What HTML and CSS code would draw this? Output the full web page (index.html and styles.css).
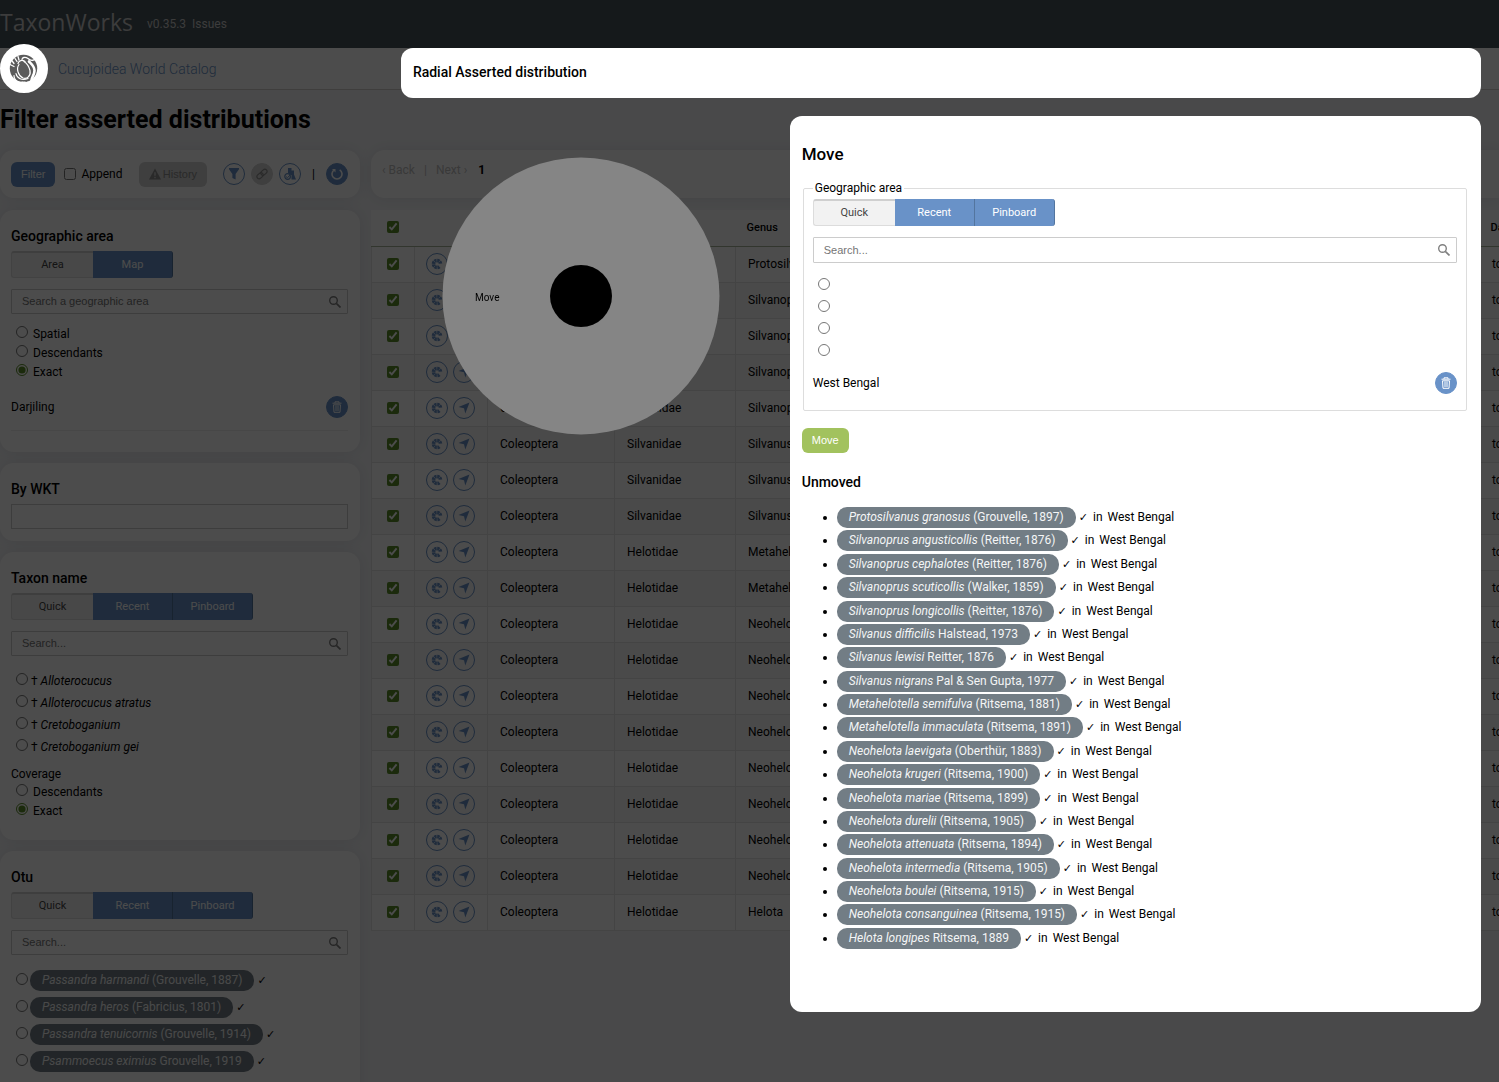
FILE: index.html
```html
<!DOCTYPE html>
<html lang="en">
<head>
<meta charset="utf-8">
<title>Filter asserted distributions</title>
<link rel="stylesheet" href="styles.css">
</head>
<body>
<svg class="sprite" aria-hidden="true">
  <symbol id="i-radial" viewBox="0 0 12 12"><circle cx="6" cy="6" r="3.500" fill="none" stroke="currentColor" stroke-width="3.600" pathLength="8" stroke-dasharray=".8 .2 .8 .2 .8 .2 .8 .2 .8 .2 .8 .2 .8 1.200" transform="rotate(48 6 6)"/></symbol>
  <symbol id="i-nav" viewBox="0 0 12 12"><path d="M11.500 .5 7.300 11.500 6 6.300 .5 5z" fill="currentColor"/></symbol>
  <symbol id="i-search" viewBox="0 0 12 12"><circle cx="4.500" cy="4.500" r="3.800" fill="none" stroke="currentColor" stroke-width="1.400"/><path d="M7.300 7.300 11.500 11.500" stroke="currentColor" stroke-width="1.700"/></symbol>
  <symbol id="i-trash" viewBox="0 0 12 12"><path d="M1.500 2.200h9M4 2V.8h4V2M2.500 3.800h7l-.5 7.500H3z" fill="none" stroke="currentColor"/><path d="M5 4.500v5.500M7 4.500v5.500" stroke="currentColor"/></symbol>
  <symbol id="i-funnel" viewBox="0 0 12 12"><path d="M1 0h10v1.200L7.600 6v5.500L4.400 10V6L1 1.200z" fill="currentColor"/></symbol>
  <symbol id="i-link" viewBox="0 0 12 12"><g fill="none" stroke="currentColor" stroke-width="1.100" transform="rotate(-42 6 6)"><rect x="0" y="3.800" width="6.800" height="4.400" rx="2.200"/><rect x="5.200" y="3.800" width="6.800" height="4.400" rx="2.200"/></g></symbol>
  <symbol id="i-source" viewBox="0 0 12 12"><path d="M4 0h3.500v2.500H10V6.500L12 11.500H7.500V7H6.500L4 5z" fill="currentColor"/><circle cx="3.600" cy="8.500" r="2.800" fill="none" stroke="currentColor" stroke-width="1.200"/><path d="M2 8.500l1.400 1.300L6 7" fill="none" stroke="currentColor"/></symbol>
  <symbol id="i-reset" viewBox="0 0 12 12"><path d="M3.300 1.800a5 5 0 1 0 5.400 0" fill="none" stroke="currentColor" stroke-width="1.600"/><path d="M1 1h3.500v3.500z" fill="currentColor"/></symbol>
  <symbol id="i-warn" viewBox="0 0 12 12"><path d="M6 .5 12 11.500H0z" fill="currentColor"/><path d="M6 4.300v3.500M6 8.800V10.300" stroke="#d2d2d2" stroke-width="1.400"/></symbol>
</svg>

<div class="app">
  <header class="topbar">
    <a class="brand" href="#">TaxonWorks</a>
    <a href="#">v0.35.3</a>
    <a href="#">Issues</a>
  </header>
  <nav class="project"><a href="#">Cucujoidea World Catalog</a></nav>
  <h1>Filter asserted distributions</h1>

  <div class="columns">
    <aside class="sidebar">
      <section class="card actions">
        <button class="btn primary">Filter</button>
        <label class="append"><input type="checkbox"> Append</label>
        <button class="btn history" disabled><svg class="icon"><use href="#i-warn"/></svg>History</button>
        <div class="circles">
          <button class="circle" aria-label="Radial filter"><svg class="icon"><use href="#i-funnel"/></svg></button>
          <button class="circle off" aria-label="Linker" disabled><svg class="icon"><use href="#i-link"/></svg></button>
          <button class="circle" aria-label="Source"><svg class="icon"><use href="#i-source"/></svg></button>
        </div>
        <span class="bar">|</span>
        <button class="circle solid" aria-label="Reset"><svg class="icon"><use href="#i-reset"/></svg></button>
      </section>

      <section class="card">
        <h2>Geographic area</h2>
        <div class="tabs"><button class="active">Area</button><button>Map</button></div>
        <div class="search"><input type="text" placeholder="Search a geographic area" aria-label="Search a geographic area"><svg class="icon"><use href="#i-search"/></svg></div>
        <div class="options">
          <label><input type="radio" name="geo">Spatial</label>
          <label><input type="radio" name="geo">Descendants</label>
          <label><input type="radio" name="geo" checked>Exact</label>
        </div>
        <div class="picked"><span>Darjiling</span><button class="circle solid" aria-label="Remove"><svg class="icon"><use href="#i-trash"/></svg></button></div>
        <hr>
      </section>

      <section class="card">
        <h2><label for="wkt">By WKT</label></h2>
        <input class="field" type="text" id="wkt">
      </section>

      <section class="card">
        <h2>Taxon name</h2>
        <div class="tabs"><button class="active">Quick</button><button>Recent</button><button>Pinboard</button></div>
        <div class="search"><input type="text" placeholder="Search..." aria-label="Search taxon name"><svg class="icon"><use href="#i-search"/></svg></div>
        <div class="options names">
          <label><input type="radio" name="taxon"><span>† <i>Alloterocucus</i></span></label>
          <label><input type="radio" name="taxon"><span>† <i>Alloterocucus atratus</i></span></label>
          <label><input type="radio" name="taxon"><span>† <i>Cretoboganium</i></span></label>
          <label><input type="radio" name="taxon"><span>† <i>Cretoboganium gei</i></span></label>
        </div>
        <div class="coverage">Coverage</div>
        <div class="options last">
          <label><input type="radio" name="cov">Descendants</label>
          <label><input type="radio" name="cov" checked>Exact</label>
        </div>
      </section>

      <section class="card">
        <h2>Otu</h2>
        <div class="tabs"><button class="active">Quick</button><button>Recent</button><button>Pinboard</button></div>
        <div class="search"><input type="text" placeholder="Search..." aria-label="Search otu"><svg class="icon"><use href="#i-search"/></svg></div>
        <div class="options otus">
          <label><input type="radio" name="otu"><span class="pill"><i>Passandra harmandi</i> (Grouvelle, 1887)</span><b class="tick">✓</b></label>
          <label><input type="radio" name="otu"><span class="pill"><i>Passandra heros</i> (Fabricius, 1801)</span><b class="tick">✓</b></label>
          <label><input type="radio" name="otu"><span class="pill"><i>Passandra tenuicornis</i> (Grouvelle, 1914)</span><b class="tick">✓</b></label>
          <label><input type="radio" name="otu"><span class="pill"><i>Psammoecus eximius</i> Grouvelle, 1919</span><b class="tick">✓</b></label>
        </div>
      </section>
    </aside>

    <main class="results">
      <nav class="card pager"><span>‹ Back</span><span>|</span><span>Next ›</span><b>1</b></nav>
      <table>
        <colgroup><col class="c-check"><col class="c-tools"><col class="c-order"><col class="c-family"><col><col class="c-end"></colgroup>
        <thead><tr><th><input type="checkbox" checked aria-label="Select all"></th><th></th><th></th><th></th><th>Genus</th><th>Date</th></tr></thead>
        <tbody>
          <tr><td><input type="checkbox" checked aria-label="Select"></td><td><div class="tools"><button class="circle" aria-label="Radial annotator"><svg class="icon"><use href="#i-radial"/></svg></button><button class="circle" aria-label="Radial navigator"><svg class="icon"><use href="#i-nav"/></svg></button></div></td><td>Coleoptera</td><td>Silvanidae</td><td>Protosilvanus</td><td>to</td></tr>
          <tr><td><input type="checkbox" checked aria-label="Select"></td><td><div class="tools"><button class="circle" aria-label="Radial annotator"><svg class="icon"><use href="#i-radial"/></svg></button><button class="circle" aria-label="Radial navigator"><svg class="icon"><use href="#i-nav"/></svg></button></div></td><td>Coleoptera</td><td>Silvanidae</td><td>Silvanoprus</td><td>to</td></tr>
          <tr><td><input type="checkbox" checked aria-label="Select"></td><td><div class="tools"><button class="circle" aria-label="Radial annotator"><svg class="icon"><use href="#i-radial"/></svg></button><button class="circle" aria-label="Radial navigator"><svg class="icon"><use href="#i-nav"/></svg></button></div></td><td>Coleoptera</td><td>Silvanidae</td><td>Silvanoprus</td><td>to</td></tr>
          <tr><td><input type="checkbox" checked aria-label="Select"></td><td><div class="tools"><button class="circle" aria-label="Radial annotator"><svg class="icon"><use href="#i-radial"/></svg></button><button class="circle" aria-label="Radial navigator"><svg class="icon"><use href="#i-nav"/></svg></button></div></td><td>Coleoptera</td><td>Silvanidae</td><td>Silvanoprus</td><td>to</td></tr>
          <tr><td><input type="checkbox" checked aria-label="Select"></td><td><div class="tools"><button class="circle" aria-label="Radial annotator"><svg class="icon"><use href="#i-radial"/></svg></button><button class="circle" aria-label="Radial navigator"><svg class="icon"><use href="#i-nav"/></svg></button></div></td><td>Coleoptera</td><td>Silvanidae</td><td>Silvanoprus</td><td>to</td></tr>
          <tr><td><input type="checkbox" checked aria-label="Select"></td><td><div class="tools"><button class="circle" aria-label="Radial annotator"><svg class="icon"><use href="#i-radial"/></svg></button><button class="circle" aria-label="Radial navigator"><svg class="icon"><use href="#i-nav"/></svg></button></div></td><td>Coleoptera</td><td>Silvanidae</td><td>Silvanus</td><td>to</td></tr>
          <tr><td><input type="checkbox" checked aria-label="Select"></td><td><div class="tools"><button class="circle" aria-label="Radial annotator"><svg class="icon"><use href="#i-radial"/></svg></button><button class="circle" aria-label="Radial navigator"><svg class="icon"><use href="#i-nav"/></svg></button></div></td><td>Coleoptera</td><td>Silvanidae</td><td>Silvanus</td><td>to</td></tr>
          <tr><td><input type="checkbox" checked aria-label="Select"></td><td><div class="tools"><button class="circle" aria-label="Radial annotator"><svg class="icon"><use href="#i-radial"/></svg></button><button class="circle" aria-label="Radial navigator"><svg class="icon"><use href="#i-nav"/></svg></button></div></td><td>Coleoptera</td><td>Silvanidae</td><td>Silvanus</td><td>to</td></tr>
          <tr><td><input type="checkbox" checked aria-label="Select"></td><td><div class="tools"><button class="circle" aria-label="Radial annotator"><svg class="icon"><use href="#i-radial"/></svg></button><button class="circle" aria-label="Radial navigator"><svg class="icon"><use href="#i-nav"/></svg></button></div></td><td>Coleoptera</td><td>Helotidae</td><td>Metahelotella</td><td>to</td></tr>
          <tr><td><input type="checkbox" checked aria-label="Select"></td><td><div class="tools"><button class="circle" aria-label="Radial annotator"><svg class="icon"><use href="#i-radial"/></svg></button><button class="circle" aria-label="Radial navigator"><svg class="icon"><use href="#i-nav"/></svg></button></div></td><td>Coleoptera</td><td>Helotidae</td><td>Metahelotella</td><td>to</td></tr>
          <tr><td><input type="checkbox" checked aria-label="Select"></td><td><div class="tools"><button class="circle" aria-label="Radial annotator"><svg class="icon"><use href="#i-radial"/></svg></button><button class="circle" aria-label="Radial navigator"><svg class="icon"><use href="#i-nav"/></svg></button></div></td><td>Coleoptera</td><td>Helotidae</td><td>Neohelota</td><td>to</td></tr>
          <tr><td><input type="checkbox" checked aria-label="Select"></td><td><div class="tools"><button class="circle" aria-label="Radial annotator"><svg class="icon"><use href="#i-radial"/></svg></button><button class="circle" aria-label="Radial navigator"><svg class="icon"><use href="#i-nav"/></svg></button></div></td><td>Coleoptera</td><td>Helotidae</td><td>Neohelota</td><td>to</td></tr>
          <tr><td><input type="checkbox" checked aria-label="Select"></td><td><div class="tools"><button class="circle" aria-label="Radial annotator"><svg class="icon"><use href="#i-radial"/></svg></button><button class="circle" aria-label="Radial navigator"><svg class="icon"><use href="#i-nav"/></svg></button></div></td><td>Coleoptera</td><td>Helotidae</td><td>Neohelota</td><td>to</td></tr>
          <tr><td><input type="checkbox" checked aria-label="Select"></td><td><div class="tools"><button class="circle" aria-label="Radial annotator"><svg class="icon"><use href="#i-radial"/></svg></button><button class="circle" aria-label="Radial navigator"><svg class="icon"><use href="#i-nav"/></svg></button></div></td><td>Coleoptera</td><td>Helotidae</td><td>Neohelota</td><td>to</td></tr>
          <tr><td><input type="checkbox" checked aria-label="Select"></td><td><div class="tools"><button class="circle" aria-label="Radial annotator"><svg class="icon"><use href="#i-radial"/></svg></button><button class="circle" aria-label="Radial navigator"><svg class="icon"><use href="#i-nav"/></svg></button></div></td><td>Coleoptera</td><td>Helotidae</td><td>Neohelota</td><td>to</td></tr>
          <tr><td><input type="checkbox" checked aria-label="Select"></td><td><div class="tools"><button class="circle" aria-label="Radial annotator"><svg class="icon"><use href="#i-radial"/></svg></button><button class="circle" aria-label="Radial navigator"><svg class="icon"><use href="#i-nav"/></svg></button></div></td><td>Coleoptera</td><td>Helotidae</td><td>Neohelota</td><td>to</td></tr>
          <tr><td><input type="checkbox" checked aria-label="Select"></td><td><div class="tools"><button class="circle" aria-label="Radial annotator"><svg class="icon"><use href="#i-radial"/></svg></button><button class="circle" aria-label="Radial navigator"><svg class="icon"><use href="#i-nav"/></svg></button></div></td><td>Coleoptera</td><td>Helotidae</td><td>Neohelota</td><td>to</td></tr>
          <tr><td><input type="checkbox" checked aria-label="Select"></td><td><div class="tools"><button class="circle" aria-label="Radial annotator"><svg class="icon"><use href="#i-radial"/></svg></button><button class="circle" aria-label="Radial navigator"><svg class="icon"><use href="#i-nav"/></svg></button></div></td><td>Coleoptera</td><td>Helotidae</td><td>Neohelota</td><td>to</td></tr>
          <tr><td><input type="checkbox" checked aria-label="Select"></td><td><div class="tools"><button class="circle" aria-label="Radial annotator"><svg class="icon"><use href="#i-radial"/></svg></button><button class="circle" aria-label="Radial navigator"><svg class="icon"><use href="#i-nav"/></svg></button></div></td><td>Coleoptera</td><td>Helotidae</td><td>Helota</td><td>to</td></tr>
        </tbody>
      </table>
    </main>
  </div>
</div>

<div class="overlay">
  <div class="modal" role="dialog" aria-label="Radial Asserted distribution">
    <header class="modal-head">Radial Asserted distribution</header>
    <div class="wheel">
      <svg viewBox="0 0 278 278" role="img" aria-label="Move">
        <circle cx="139" cy="139" r="138.500" fill="#858585"/>
        <circle cx="139" cy="139" r="31" fill="#000"/>
        <text x="33" y="144">Move</text>
      </svg>
    </div>
    <section class="panel">
      <h2>Move</h2>
      <fieldset>
        <legend>Geographic area</legend>
        <div class="tabs"><button class="active">Quick</button><button>Recent</button><button>Pinboard</button></div>
        <div class="search"><input type="text" placeholder="Search..." aria-label="Search geographic area"><svg class="icon"><use href="#i-search"/></svg></div>
        <div class="options blank">
          <label><input type="radio" name="area" aria-label="Area 1"></label>
          <label><input type="radio" name="area" aria-label="Area 2"></label>
          <label><input type="radio" name="area" aria-label="Area 3"></label>
          <label><input type="radio" name="area" aria-label="Area 4"></label>
        </div>
        <div class="picked"><span>West Bengal</span><button class="circle solid" aria-label="Remove"><svg class="icon"><use href="#i-trash"/></svg></button></div>
      </fieldset>
      <button class="btn create">Move</button>
      <h3>Unmoved</h3>
      <ul>
        <li><span class="pill"><i>Protosilvanus granosus</i> (Grouvelle, 1897)</span><b class="tick">✓</b><span class="in">in</span>West Bengal</li>
        <li><span class="pill"><i>Silvanoprus angusticollis</i> (Reitter, 1876)</span><b class="tick">✓</b><span class="in">in</span>West Bengal</li>
        <li><span class="pill"><i>Silvanoprus cephalotes</i> (Reitter, 1876)</span><b class="tick">✓</b><span class="in">in</span>West Bengal</li>
        <li><span class="pill"><i>Silvanoprus scuticollis</i> (Walker, 1859)</span><b class="tick">✓</b><span class="in">in</span>West Bengal</li>
        <li><span class="pill"><i>Silvanoprus longicollis</i> (Reitter, 1876)</span><b class="tick">✓</b><span class="in">in</span>West Bengal</li>
        <li><span class="pill"><i>Silvanus difficilis</i> Halstead, 1973</span><b class="tick">✓</b><span class="in">in</span>West Bengal</li>
        <li><span class="pill"><i>Silvanus lewisi</i> Reitter, 1876</span><b class="tick">✓</b><span class="in">in</span>West Bengal</li>
        <li><span class="pill"><i>Silvanus nigrans</i> Pal &amp; Sen Gupta, 1977</span><b class="tick">✓</b><span class="in">in</span>West Bengal</li>
        <li><span class="pill"><i>Metahelotella semifulva</i> (Ritsema, 1881)</span><b class="tick">✓</b><span class="in">in</span>West Bengal</li>
        <li><span class="pill"><i>Metahelotella immaculata</i> (Ritsema, 1891)</span><b class="tick">✓</b><span class="in">in</span>West Bengal</li>
        <li><span class="pill"><i>Neohelota laevigata</i> (Oberthür, 1883)</span><b class="tick">✓</b><span class="in">in</span>West Bengal</li>
        <li><span class="pill"><i>Neohelota krugeri</i> (Ritsema, 1900)</span><b class="tick">✓</b><span class="in">in</span>West Bengal</li>
        <li><span class="pill"><i>Neohelota mariae</i> (Ritsema, 1899)</span><b class="tick">✓</b><span class="in">in</span>West Bengal</li>
        <li><span class="pill"><i>Neohelota durelii</i> (Ritsema, 1905)</span><b class="tick">✓</b><span class="in">in</span>West Bengal</li>
        <li><span class="pill"><i>Neohelota attenuata</i> (Ritsema, 1894)</span><b class="tick">✓</b><span class="in">in</span>West Bengal</li>
        <li><span class="pill"><i>Neohelota intermedia</i> (Ritsema, 1905)</span><b class="tick">✓</b><span class="in">in</span>West Bengal</li>
        <li><span class="pill"><i>Neohelota boulei</i> (Ritsema, 1915)</span><b class="tick">✓</b><span class="in">in</span>West Bengal</li>
        <li><span class="pill"><i>Neohelota consanguinea</i> (Ritsema, 1915)</span><b class="tick">✓</b><span class="in">in</span>West Bengal</li>
        <li><span class="pill"><i>Helota longipes</i> Ritsema, 1889</span><b class="tick">✓</b><span class="in">in</span>West Bengal</li>
      </ul>
    </section>
  </div>
</div>

<a class="badge" href="#" aria-label="TaxonWorks home">
  <svg viewBox="0 0 48 48">
    <circle cx="23.500" cy="24" r="13.700" fill="#5a5a5a"/>
    <g fill="none" stroke="#fff" stroke-linecap="round">
      <path d="M19 20c-3 4-1 11 4 13.500 4 1.500 8-2 7-7.500-1-4-3-7-6-9" stroke-width="1.200"/>
      <path d="M18 19c1-3 4-4 7-2M17 17l-2-3M19 15.500l-1-3.500M14 22l-4-2M14 19l-3-4M22 15c0-2 3-3 6-1 3 3 6 2 8 0" stroke-width="1.300"/>
      <path d="M14 31c0 5 5 8 11 6.500M16 29c1 5 6 7.500 12 5" stroke-width="1.200"/>
      <path d="M29 17c3 3 5.500 5 5.500 9s-2.500 6-3 10" stroke-width="2.600"/>
      <path d="M31 36.500c-3 1.500-6 2-9 1" stroke-width="1"/>
    </g>
  </svg>
</a>
</body>
</html>
```
FILE: styles.css
```css
* { box-sizing: border-box; }

body {
  margin: 0;
  background: #f4f5f8;
  color: #000;
  font: 12px/16px Roboto, sans-serif;
  accent-color: #5a8c28;
}

h1, h2, h3 { margin: 0; }
a { text-decoration: none; }
button { font: inherit; border: 0; padding: 0; }
input { margin: 0; }

.sprite { position: absolute; width: 0; height: 0; }
.icon { display: block; width: 12px; height: 12px; flex: none; }

.app { height: 100vh; overflow: hidden; }

.topbar {
  display: flex;
  align-items: center;
  gap: 6px;
  height: 48px;
  background: #46545c;
}
.topbar a { color: #c8c8c8; }
.topbar .brand {
  margin-right: 8px;
  padding-bottom: 5px;
  font: 500 23px/38px "Open Sans", sans-serif;
}

.project {
  height: 42px;
  padding-left: 58px;
  border-bottom: 1px solid #d4d0cc;
  background: #fff;
  font-size: 14px;
  font-weight: 300;
  line-height: 42px;
}
.project a { color: #6992c8; }

h1 {
  font-size: 25px;
  line-height: 60px;
}

.columns { display: flex; gap: 11px; }

.sidebar {
  display: flex;
  flex: none;
  flex-direction: column;
  gap: 11px;
  width: 360px;
}

.card {
  padding: 16px 12px 12px 11px;
  border-radius: 14px;
  background: #fff;
  box-shadow: 0 0 16px rgba(0, 0, 0, .08);
}
.card h2 {
  margin-bottom: 5px;
  font-size: 14px;
  font-weight: 500;
  line-height: 20px;
}

.actions {
  display: flex;
  align-items: center;
  height: 48px;
  margin-bottom: 1px;
  padding-block: 0;
}
.btn {
  height: 25px;
  padding: 0 10px;
  border-radius: 6px;
  color: #fff;
  font: 11px/25px "Liberation Sans", sans-serif;
}
.primary { background: #6992c8; }
.append { display: flex; align-items: center; gap: 5px; margin: 0 auto 0 9px; }
.history {
  display: flex;
  align-items: center;
  gap: 2px;
  margin-right: 16px;
  background: #d2d2d2;
  color: #8c8c8c;
}
.circles { display: flex; gap: 6px; }
.bar { margin: 0 11px; }

.circle {
  display: flex;
  align-items: center;
  justify-content: center;
  flex: none;
  width: 22px;
  height: 22px;
  border: 1px solid #6992c8;
  border-radius: 50%;
  background: none;
  color: #6992c8;
}
.circle.solid { background: #6992c8; color: #fff; }
.circle.off { border-color: #d2d2d2; background: #d2d2d2; color: #8c8c8c; }

.tabs { display: flex; }
.tabs button {
  width: 80px;
  height: 27px;
  border-right: 1px solid #53759f;
  background: #6992c8;
  color: #fff;
  font-size: 11px;
}
.tabs .active {
  width: 82px;
  border: 1px solid #dcdcdc;
  border-top: 2px solid #cfcfcf;
  border-right: 0;
  border-radius: 3px 0 0 3px;
  background: #f2f2f2;
  color: #444;
}
.tabs button:last-child { border-radius: 0 3px 3px 0; }

.search {
  display: flex;
  align-items: center;
  margin-top: 11px;
  padding-right: 6px;
  border: 1px solid #ccc;
  border-radius: 1px;
  background: #fff;
  color: #808080;
}
.search input {
  flex: 1;
  height: 23px;
  padding: 0 10px;
  border: 0;
  background: none;
  font: 11px/23px "Liberation Sans", sans-serif;
}
.search input::placeholder { color: #757575; }
.field {
  display: block;
  width: 100%;
  height: 25px;
  border: 1px solid #ccc;
}

.options { margin-top: 10px; }
.options label {
  display: flex;
  align-items: center;
  height: 19px;
}
input[type="radio"] {
  width: 12px;
  height: 12px;
  margin: 0 5px 4px;
}
input[type="checkbox"] { width: 12px; height: 12px; vertical-align: middle; }
.names { margin-top: 14px; }
.names label { height: 22px; }
.names input[type="radio"] { margin-right: 3px; }
.coverage { margin-top: 8px; }
.options.last { margin: 0 0 8px; }
.otus { margin: 12px 0 24px; }
.otus label { height: 27px; }
.otus input[type="radio"] { margin-right: 2px; }

.picked {
  display: flex;
  align-items: center;
  justify-content: space-between;
  margin-top: 15px;
}
hr {
  margin: 12px 0 9px;
  border: 0;
  border-top: 1px solid #eee;
}

.pill {
  display: inline-block;
  padding: 0 12px;
  border-radius: 10px;
  background: #727d85;
  color: #f4f5f6;
  line-height: 21px;
}
.tick {
  margin-left: 3px;
  font-family: "DejaVu Sans", sans-serif;
  font-size: 11px;
}

.results { flex: 1; min-width: 0; }
.pager {
  display: flex;
  gap: 9px;
  height: 48px;
  margin-bottom: 12px;
  border-radius: 14px 0 0 14px;
  padding-top: 12px;
  color: #c0c0c0;
}
.pager b { margin-left: 2px; color: #000; }

table {
  width: calc(100% + 100px);
  border-collapse: collapse;
  table-layout: fixed;
  background: #fff;
}
.c-check { width: 43px; }
.c-tools { width: 73px; }
.c-order { width: 127px; }
.c-family { width: 121px; }
.c-end { width: 119px; }
th, td { height: 36px; padding: 0 0 0 12px; text-align: left; }
th { padding-left: 11px; border-bottom: 1px solid #a8b49a; font-weight: 500; font-size: 11px; }
td { border: 1px solid #e4e4e4; }
th:first-child, td:first-child { padding: 0 0 2px; text-align: center; }
tbody tr:nth-child(even) { background: #f8f8f8; }
.tools { display: flex; gap: 5px; }
.tools .circle { margin-left: -1px; margin-right: 1px; }

.overlay {
  position: fixed;
  inset: 0;
  overflow: hidden;
  padding: 48px 18px 0 0;
  background: rgba(0, 0, 0, .7);
}
.modal {
  display: grid;
  grid-template-columns: 36% 64%;
  gap: 18px 0;
  width: calc(73% - 1px);
  margin-left: auto;
}
.modal-head {
  grid-column: 1 / 3;
  padding: 0 12px;
  border-radius: 12px;
  background: #fff;
  font-size: 14px;
  font-weight: 500;
  line-height: 49px;
  padding-bottom: 1px;
}
.wheel { padding: 41px 0 0 41px; }
.wheel svg { display: block; width: 278px; height: 278px; }
.wheel text { font-size: 10px; }

.panel {
  padding: 26px 14px 63px 12px;
  border-radius: 12px;
  background: #fff;
}
.panel h2 {
  margin-bottom: 14px;
  font-size: 17px;
  font-weight: 500;
  line-height: 24px;
}
fieldset {
  margin: 0 0 0 1px;
  padding: 3px 9px 16px;
  border: 1px solid #ddd;
  border-radius: 2px;
}
legend { padding: 0 2px; }
fieldset .search input { height: 24px; }
.blank { margin-top: 12px; }
.blank label { height: 22px; }
fieldset .picked { margin-top: 9px; }
.create {
  display: block;
  margin: 17px 0 19px;
  background: #a2c25e;
}
h3 {
  font-size: 14px;
  font-weight: 500;
  line-height: 20px;
}
ul {
  display: flex;
  flex-direction: column;
  justify-content: space-between;
  min-height: 442px;
  margin: 15px 0 0;
  padding: 0 0 0 35px;
}
li { line-height: 21px; }
.in { margin: 0 5px; }

.badge {
  position: fixed;
  top: 44px;
  left: 0;
  width: 48px;
  height: 49px;
  border-radius: 50%;
  background: #fff;
}
.badge svg { display: block; width: 48px; height: 49px; }
```
